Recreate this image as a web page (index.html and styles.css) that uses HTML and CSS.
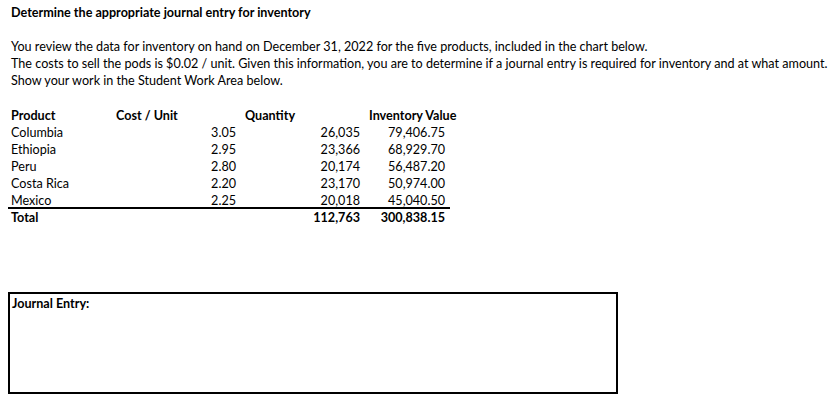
FILE: index.html
```html
<!DOCTYPE html>
<html lang="en">
<head>
<meta charset="utf-8">
<title>Journal entry for inventory</title>
<link rel="stylesheet" href="styles.css">
</head>
<body>
<main class="sheet">
  <h1 class="title">Determine the appropriate journal entry for inventory</h1>
  <p class="intro">You review the data for inventory on hand on December 31, 2022 for the five products, included in the chart below.<br>The costs to sell the pods is $0.02 / unit. Given this information, you are to determine if a journal entry is required for inventory and at what amount.<br>Show your work in the Student Work Area below.</p>
  <div class="table">
    <div class="row head">
      <span class="c-a">Product</span>
      <span class="c-b">Cost / Unit</span>
      <span class="c-c">Quantity</span>
      <span class="c-d">Inventory Value</span>
    </div>
    <div class="row">
      <span class="c-a">Columbia</span><span class="c-b num">3.05</span><span class="c-c num">26,035</span><span class="c-d num">79,406.75</span>
    </div>
    <div class="row">
      <span class="c-a">Ethiopia</span><span class="c-b num">2.95</span><span class="c-c num">23,366</span><span class="c-d num">68,929.70</span>
    </div>
    <div class="row">
      <span class="c-a">Peru</span><span class="c-b num">2.80</span><span class="c-c num">20,174</span><span class="c-d num">56,487.20</span>
    </div>
    <div class="row">
      <span class="c-a">Costa Rica</span><span class="c-b num">2.20</span><span class="c-c num">23,170</span><span class="c-d num">50,974.00</span>
    </div>
    <div class="row last">
      <span class="c-a">Mexico</span><span class="c-b num">2.25</span><span class="c-c num">20,018</span><span class="c-d num">45,040.50</span>
    </div>
    <div class="row total">
      <span class="c-a">Total</span><span class="c-b"></span><span class="c-c num">112,763</span><span class="c-d num">300,838.15</span>
    </div>
  </div>
  <section class="journal">
    <h2 class="journal-label">Journal Entry:</h2>
  </section>
</main>
</body>
</html>
```

FILE: styles.css
```css
* { box-sizing: border-box; }
html, body { margin: 0; padding: 0; background: #fff; }
body {
  font-family: Lato, "Open Sans", sans-serif;
  font-size: 12.6px;
  line-height: 17px;
  color: #000;
}
.sheet {
  padding: 4px 8px 0 8px;
  width: 839px;
}
.title {
  margin: 0 0 0 3px;
  font-size: 12.6px;
  font-weight: 700;
  line-height: 17px;
}
.intro {
  margin: 17px 0 0 3px;
  white-space: nowrap;
}
.table {
  margin-top: 18px;
  width: 442px;
}
.row {
  display: grid;
  grid-template-columns: 105px 129px 120px 88px;
  height: 17px;
}
.row span { white-space: nowrap; }
.c-a { padding-left: 3px; }
.c-b { padding-left: 3px; }
.c-c { padding-left: 3px; }
.c-d { padding-left: 7px; }
.head span { font-weight: 700; }
.c-b.num { text-align: right; padding-right: 6px; }
.c-c.num { text-align: right; padding-right: 2px; }
.c-d.num { text-align: right; padding-right: 5px; padding-left: 0; }
.row.last { border-bottom: 2px solid #000; }
.total span { font-weight: 700; }
.journal {
  margin-top: 66px;
  width: 610px;
  height: 102px;
  border: 2px solid #000;
  padding: 1px 0 0 2px;
}
.journal-label {
  margin: 0;
  font-size: 12.6px;
  font-weight: 700;
  line-height: 17px;
}
```
